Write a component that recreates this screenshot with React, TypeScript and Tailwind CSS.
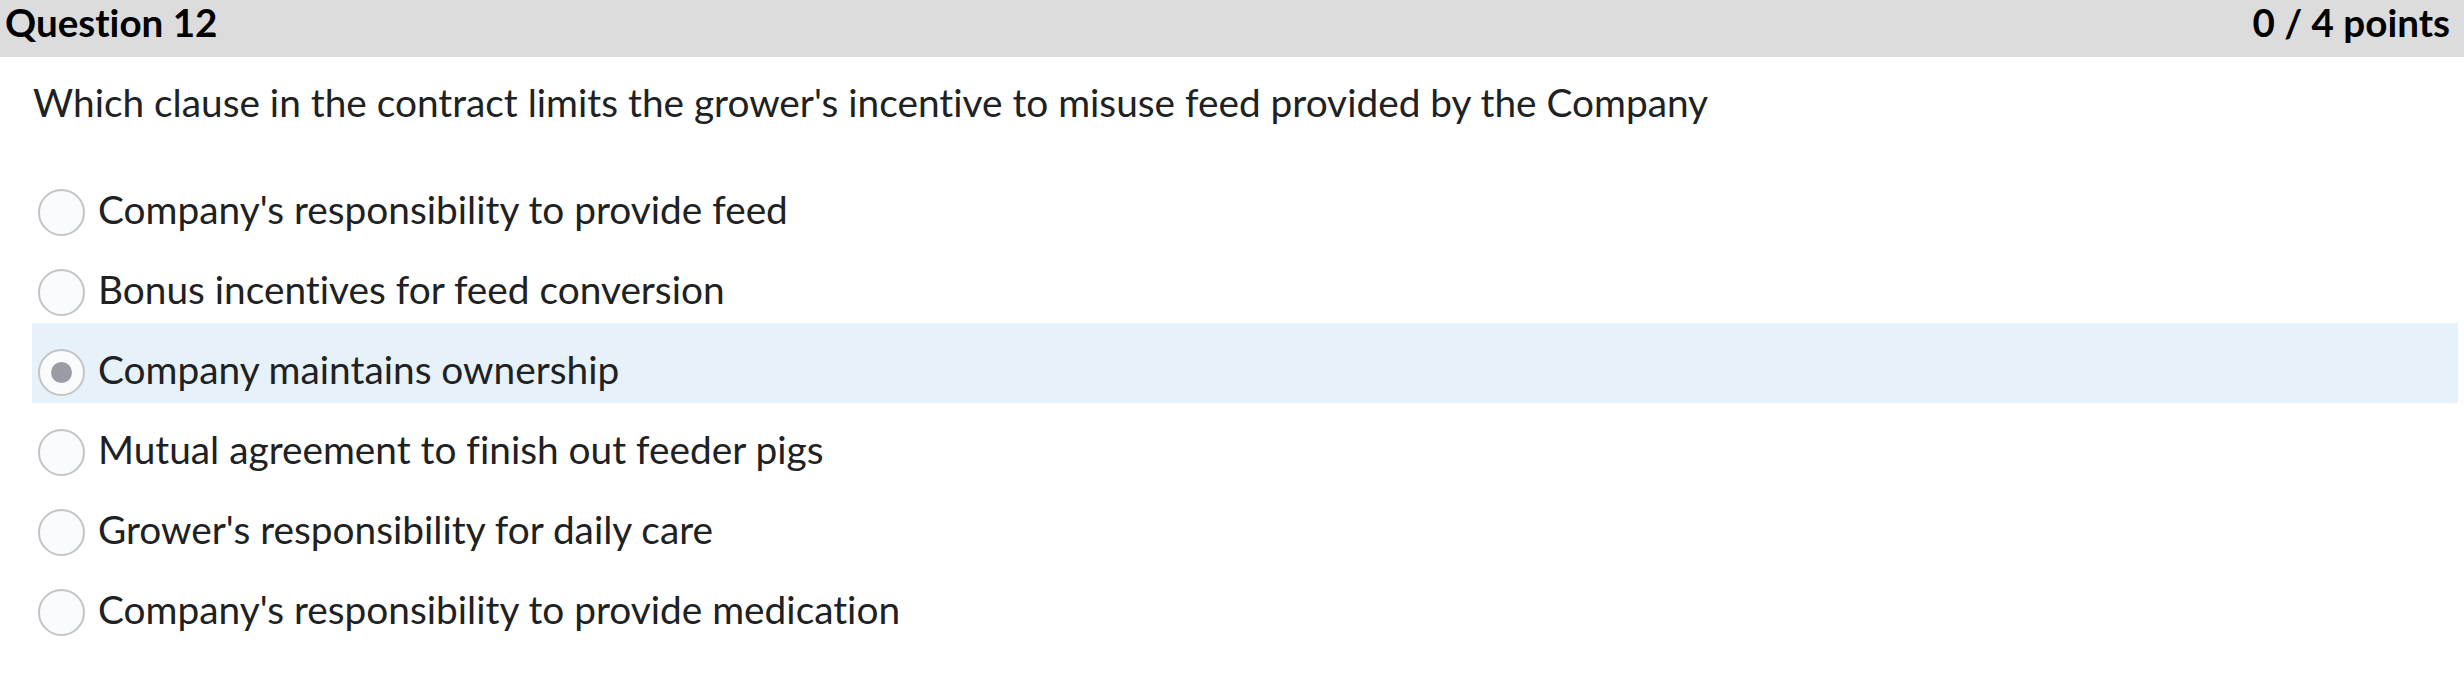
const options = [
  "Company's responsibility to provide feed",
  'Bonus incentives for feed conversion',
  'Company maintains ownership',
  'Mutual agreement to finish out feeder pigs',
  "Grower's responsibility for daily care",
  "Company's responsibility to provide medication",
];

const selected = 2;

export default function App() {
  return (
    <div
      className="min-h-screen bg-white text-[#202122] [font-variant-ligatures:none]"
      style={{ fontFamily: 'Lato, "Open Sans", sans-serif' }}
    >
      <div className="flex h-[57px] items-start justify-between bg-[#dcdcdc] pl-[5px] pr-[14px] pt-[3px] text-[38.6px] leading-[38px] font-bold text-black">
        <span>Question 12</span>
        <span>0 / 4 points</span>
      </div>
      <div className="pl-[33px] pt-[22px] text-[38.8px] leading-[1.2]">
        Which clause in the contract limits the grower's incentive to misuse feed provided by the Company
      </div>
      <div className="mt-[37px] ml-[32px] mr-[6px] flex flex-col">
        {options.map((label, i) => (
          <label
            key={label}
            className={`flex h-[80px] items-start gap-[13px] pl-[6px] pt-[23px] ${i === selected ? 'bg-[#e7f1fa]' : ''}`}
          >
            <span className="mt-[3px] flex h-[47px] w-[47px] shrink-0 items-center justify-center rounded-full border-2 border-[#c2c4c7] bg-[#fafbfd]">
              {i === selected && <span className="h-[21px] w-[21px] rounded-full bg-[#9a9ca3]" />}
            </span>
            <span className="text-[38.8px] leading-[1.2]">{label}</span>
          </label>
        ))}
      </div>
    </div>
  );
}
